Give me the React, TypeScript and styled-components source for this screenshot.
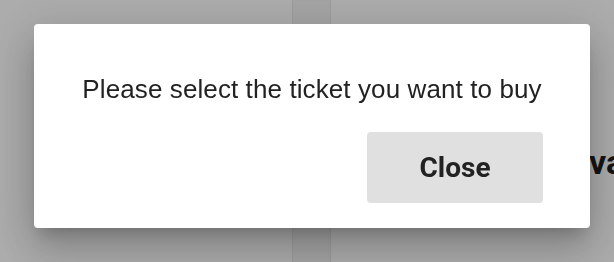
import * as React from 'react';
import styled, { createGlobalStyle } from 'styled-components';

const GlobalStyle = createGlobalStyle`
  html, body {
    margin: 0;
    padding: 0;
    width: 614px;
    height: 262px;
    overflow: hidden;
  }
  body {
    font-family: Roboto, 'Liberation Sans', sans-serif;
  }
`;

const Page = styled.div`
  display: flex;
  width: 614px;
  height: 262px;
  background: #fafafa;
`;

const Panel = styled.div<{ width: number }>`
  width: ${(p) => p.width}px;
  flex-shrink: 0;
  background: #f7f7f7;
  display: flex;
  align-items: center;
  overflow: hidden;
`;

const Divider = styled.div`
  width: 39px;
  flex-shrink: 0;
  background: #ececec;
  box-shadow: inset 1px 0 1px rgba(0, 0, 0, 0.06), inset -1px 0 1px rgba(0, 0, 0, 0.06);
`;

const PanelLabel = styled.span`
  margin-left: 240px;
  margin-top: 62px;
  font-family: Roboto, sans-serif;
  font-weight: 700;
  font-size: 34px;
  color: #1c1c1c;
  white-space: nowrap;
`;

const Backdrop = styled.div`
  position: fixed;
  inset: 0;
  background: rgba(0, 0, 0, 0.3);
  display: flex;
  align-items: flex-start;
  padding: 24px 0 0 34px;
`;

const Dialog = styled.div`
  width: 556px;
  height: 204px;
  box-sizing: border-box;
  background: #ffffff;
  border-radius: 4px;
  padding: 48px 48px 25px 48px;
  display: flex;
  flex-direction: column;
  box-shadow: 0 11px 15px -7px rgba(0, 0, 0, 0.2), 0 24px 38px 3px rgba(0, 0, 0, 0.14),
    0 9px 46px 8px rgba(0, 0, 0, 0.12);
`;

const Message = styled.p`
  margin: 0;
  font-family: 'Liberation Sans', Arial, sans-serif;
  font-size: 26px;
  letter-spacing: 0.1px;
  line-height: 34px;
  color: #222222;
  text-align: center;
  white-space: nowrap;
`;

const Actions = styled.div`
  display: flex;
  justify-content: flex-end;
  margin-top: auto;
`;

const Button = styled.button`
  width: 176px;
  height: 71px;
  margin-right: -1px;
  border: none;
  border-radius: 4px;
  background: #e0e0e0;
  font-family: Roboto, sans-serif;
  font-weight: 700;
  font-size: 28px;
  color: #222222;
  cursor: pointer;
  padding: 0;
`;

export default function App() {
  return (
    <>
      <GlobalStyle />
      <Page>
        <Panel width={292} />
        <Divider />
        <Panel width={283}>
          <PanelLabel>ava</PanelLabel>
        </Panel>
      </Page>
      <Backdrop>
        <Dialog>
          <Message>Please select the ticket you want to buy</Message>
          <Actions>
            <Button>Close</Button>
          </Actions>
        </Dialog>
      </Backdrop>
    </>
  );
}
